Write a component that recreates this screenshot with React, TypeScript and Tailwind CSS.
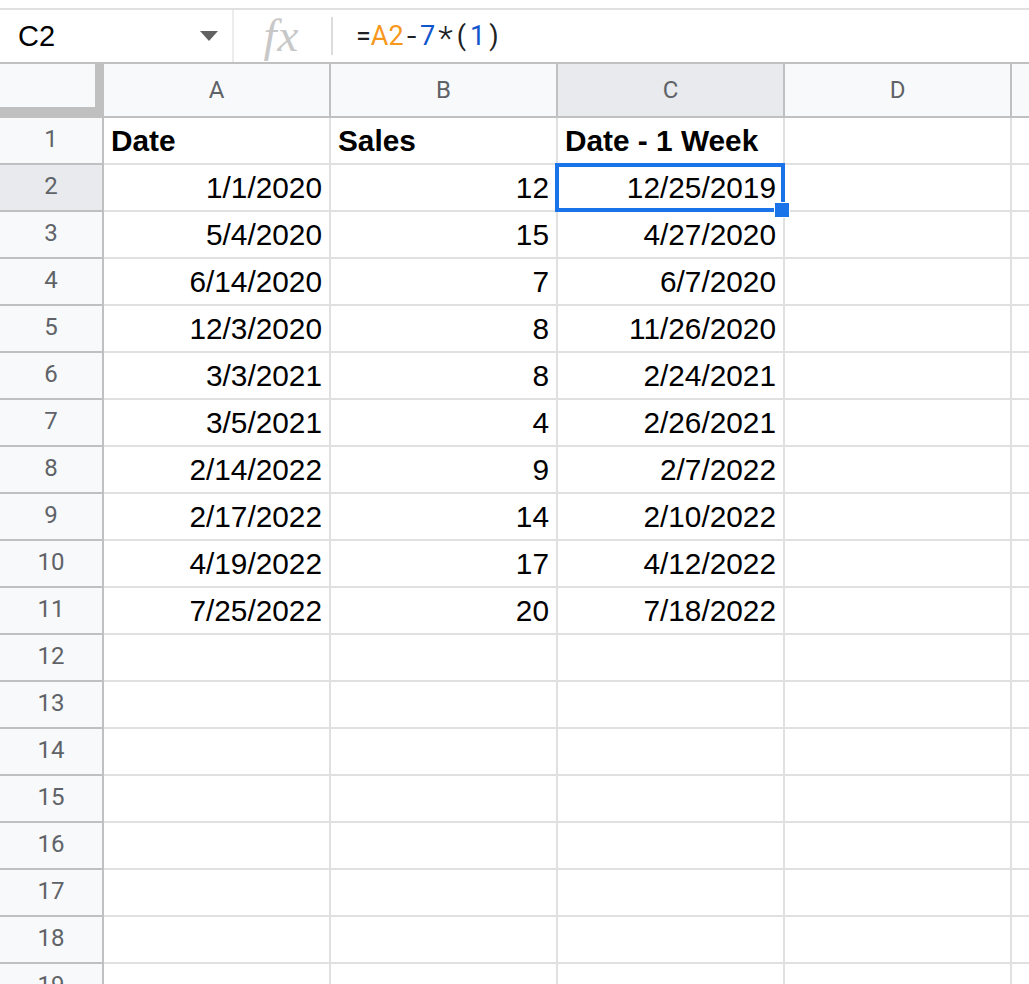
const COLUMNS = ['A', 'B', 'C', 'D']

const ROWS: [string, string, string][] = [
  ['1/1/2020', '12', '12/25/2019'],
  ['5/4/2020', '15', '4/27/2020'],
  ['6/14/2020', '7', '6/7/2020'],
  ['12/3/2020', '8', '11/26/2020'],
  ['3/3/2021', '8', '2/24/2021'],
  ['3/5/2021', '4', '2/26/2021'],
  ['2/14/2022', '9', '2/7/2022'],
  ['2/17/2022', '14', '2/10/2022'],
  ['4/19/2022', '17', '4/12/2022'],
  ['7/25/2022', '20', '7/18/2022'],
]

const BLANK_ROWS = [12, 13, 14, 15, 16, 17, 18, 19]

function RowHeader({ n, active }: { n: number, active?: boolean }) {
  return (
    <div className={`flex h-full w-[104px] shrink-0 items-center justify-center border-r-2 border-b-2 border-[#c0c0c0] pb-[4px] font-['Roboto',sans-serif] text-[24px] text-[#5f6368] ${active ? 'bg-[#e8eaed]' : 'bg-[#f8f9fa]'}`}>
      {n}
    </div>
  )
}

function Cell({ children, bold, selected }: { children?: React.ReactNode, bold?: boolean, selected?: boolean }) {
  return (
    <div className={`relative flex h-full w-[227px] shrink-0 items-center overflow-visible border-r-2 border-b-2 border-[#e0e0e0] pt-[2px] font-['Liberation_Sans',Arial,sans-serif] text-[29.8px] text-black ${bold ? 'justify-start pl-[7px] font-bold' : 'justify-end pr-[7px]'}`}>
      {children}
      {selected && (
        <>
          <div className="absolute top-[-2px] right-[-2px] bottom-[-2px] left-[-3px] border-4 border-[#1a73e8]" />
          <div className="absolute right-[-7px] bottom-[-8px] z-10 h-[16px] w-[16px] border border-white bg-[#1a73e8]" />
        </>
      )}
    </div>
  )
}

function Row({ children }: { children: React.ReactNode }) {
  return <div className="flex h-[47px]">{children}</div>
}

function FillCell() {
  return <div className="h-full flex-1 border-b-2 border-[#e0e0e0]" />
}

export default function App() {
  return (
    <div className="h-[984px] w-[1029px] overflow-hidden bg-white">
      <div className="h-[10px] border-b-2 border-[#e0e0e0]" />

      {/* name box + formula bar */}
      <div className="flex h-[54px] items-center border-b-2 border-[#c0c0c0]">
        <div className="flex w-[232px] items-center pl-[18px] pr-[14px] font-['Liberation_Sans',Arial,sans-serif] text-[29px] text-black">
          <span className="flex-1 pt-[1px]">C2</span>
          <svg width="18" height="10" viewBox="0 0 18 10"><path d="M0 0h18L9 10z" fill="#616161" /></svg>
        </div>
        <div className="h-full w-[2px] bg-[#ececec]" />
        <div className="flex w-[97px] items-center justify-center pb-[2px] pr-[2px] font-['Liberation_Serif',serif] text-[47px] italic leading-none tracking-[1px] text-[#c8c8c8]">
          fx
        </div>
        <div className="h-[38px] w-[2px] bg-[#dcdcdc]" />
        <div className="flex items-baseline pl-[23px] font-['Roboto',sans-serif] text-[27px] text-[#202124]">
          <span>=</span>
          <span className="text-[#f7981d]">A2</span>
          <span className="ml-[4px] scale-x-125">-</span>
          <span className="ml-[5px] text-[#1155cc]">7</span>
          <span className="ml-[3px] translate-y-[5px] text-[34px] font-light leading-none">*</span>
          <span className="ml-[4px]">(</span>
          <span className="ml-[4px] text-[#1155cc]">1</span>
          <span className="ml-[4px]">)</span>
        </div>
      </div>

      {/* column headers */}
      <div className="flex h-[54px]">
        <div className="h-full w-[104px] shrink-0 border-r-[9px] border-b-[11px] border-[#c0c0c0] bg-[#f8f9fa]" />
        {COLUMNS.map(col => (
          <div
            key={col}
            className={`flex h-full w-[227px] shrink-0 items-center justify-center border-r-2 border-b-2 border-[#c0c0c0] pb-[1px] font-['Roboto',sans-serif] text-[24px] text-[#5f6368] ${col === 'C' ? 'bg-[#e8eaed]' : 'bg-[#f8f9fa]'}`}
          >
            {col}
          </div>
        ))}
        <div className="h-full flex-1 border-b-2 border-[#c0c0c0] bg-[#f8f9fa]" />
      </div>

      <Row>
        <RowHeader n={1} />
        <Cell bold>Date</Cell>
        <Cell bold>Sales</Cell>
        <Cell bold>Date - 1 Week</Cell>
        <Cell />
        <FillCell />
      </Row>

      {ROWS.map((row, i) => (
        <Row key={row[0]}>
          <RowHeader n={i + 2} active={i === 0} />
          <Cell>{row[0]}</Cell>
          <Cell>{row[1]}</Cell>
          <Cell selected={i === 0}>{row[2]}</Cell>
          <Cell />
          <FillCell />
        </Row>
      ))}

      {BLANK_ROWS.map(n => (
        <Row key={n}>
          <RowHeader n={n} />
          <Cell />
          <Cell />
          <Cell />
          <Cell />
          <FillCell />
        </Row>
      ))}
    </div>
  )
}
